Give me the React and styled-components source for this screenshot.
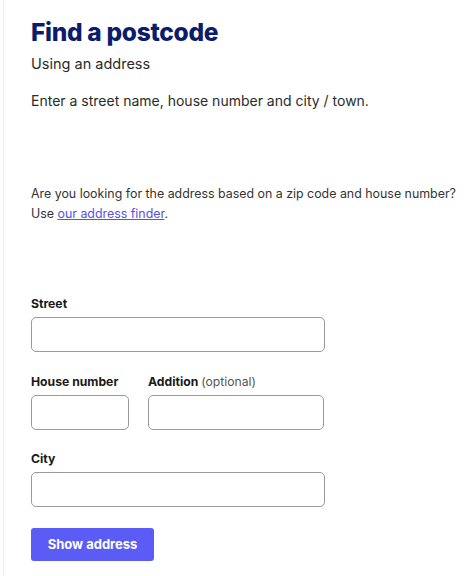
import React from "react";
import styled, { createGlobalStyle } from "styled-components";

const GlobalStyle = createGlobalStyle`
	html, body {
		margin: 0;
		padding: 0;
		background: #fff;
	}
	body {
		font-family: Inter, "Noto Sans", sans-serif;
		color: #222;
	}
`

const Page = styled.main`
	margin-left: 3px;
	border-left: 1px solid #ececec;
	min-height: 576px;
	box-sizing: border-box;
	padding: 14px 0 0 27px;
`

const Title = styled.h1`
	margin: 0;
	font-size: 24.5px;
	font-weight: 800;
	color: #0b1c6b;
	letter-spacing: -0.3px;
	line-height: 36px;
`

const Subtitle = styled.p`
	margin: 4px 0 0;
	font-size: 14.5px;
	line-height: 20px;
	color: #2b2b2b;
`

const Intro = styled.p`
	margin: 17px 0 0;
	font-size: 14px;
	line-height: 20px;
	color: #2b2b2b;
`

const Note = styled.p`
	margin: 73px 0 0;
	font-size: 12.4px;
	line-height: 20px;
	color: #333;
	white-space: nowrap;

	a {
		color: #5550e6;
		text-decoration: underline;
	}
`

const Form = styled.form`
	margin-top: 71px;
	width: 294px;
	display: flex;
	flex-direction: column;
	gap: 20.5px;
`

const Row = styled.div`
	display: flex;
	gap: 19px;
`

const Field = styled.label`
	display: flex;
	flex-direction: column;
	gap: 5px;
	width: ${p => p.width || "100%"};
`

const Label = styled.span`
	font-size: 12.2px;
	font-weight: 700;
	line-height: 17px;
	color: #1a1a1a;

	small {
		font-size: 12.2px;
		font-weight: 400;
		color: #555;
	}
`

const Input = styled.input`
	box-sizing: border-box;
	height: 35px;
	width: 100%;
	border: 1px solid #9a9a9a;
	border-radius: 5px;
	background: #fff;
	font: inherit;
	padding: 0 10px;
`

const Button = styled.button`
	align-self: flex-start;
	margin-top: 0;
	height: 33px;
	width: 123px;
	border: 0;
	border-radius: 3px;
	background: #5b5bf6;
	color: #fff;
	font-family: inherit;
	font-size: 13px;
	font-weight: 700;
`

export default function App() {
	return (
		<>
			<GlobalStyle />
			<Page>
				<Title>Find a postcode</Title>
				<Subtitle>Using an address</Subtitle>
				<Intro>Enter a street name, house number and city / town.</Intro>
				<Note>
					Are you looking for the address based on a zip code and house number?
					<br />
					Use <a href="#">our address finder</a>.
				</Note>

				<Form onSubmit={e => e.preventDefault()}>
					<Field>
						<Label>Street</Label>
						<Input />
					</Field>
					<Row>
						<Field width="98px">
							<Label>House number</Label>
							<Input />
						</Field>
						<Field width="176px">
							<Label>Addition <small>(optional)</small></Label>
							<Input />
						</Field>
					</Row>
					<Field>
						<Label>City</Label>
						<Input />
					</Field>
					<Button type="submit">Show address</Button>
				</Form>
			</Page>
		</>
	);
}
